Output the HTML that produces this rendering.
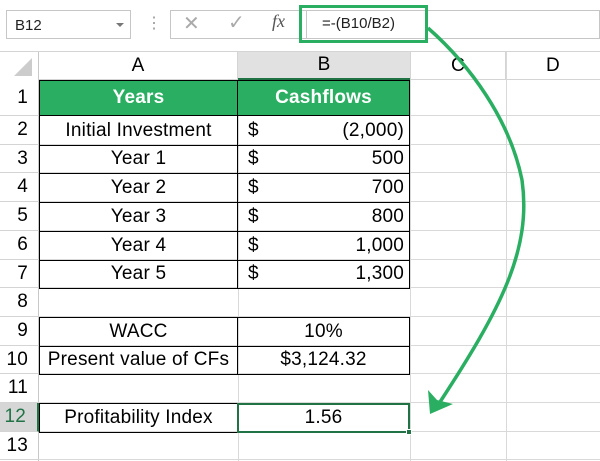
<!DOCTYPE html>
<html><head><style>
body{margin:0;width:600px;height:461px;overflow:hidden;background:#fff;font-family:"Liberation Sans",sans-serif;position:relative}
.a{position:absolute;box-sizing:border-box}
.c{display:flex;align-items:center;justify-content:center;font-size:19px;letter-spacing:0.2px;color:#000}
</style></head><body>
<!-- top bar -->
<div class="a" style="left:0;top:0;width:600px;height:52px;background:#fff;border-bottom:1px solid #d4d4d4"></div>
<div class="a" style="left:6px;top:10px;width:125px;height:29px;border:1px solid #c6c6c6;font-size:15px;padding:6px 0 0 8px;color:#222">B12</div>
<div class="a" style="left:116px;top:23px;width:0;height:0;border-left:4px solid transparent;border-right:4px solid transparent;border-top:4px solid #777"></div>
<div class="a" style="left:146px;top:13px;font-size:16px;color:#999">⋮</div>
<div class="a" style="left:170px;top:10px;width:430px;height:29px;border:1px solid #c6c6c6"></div>
<div class="a" style="left:183px;top:11px;font-size:20px;color:#aaa">✕</div>
<div class="a" style="left:228px;top:10px;font-size:20px;color:#aaa">✓</div>
<div class="a" style="left:272px;top:11px;font-size:18px;color:#555;font-family:'Liberation Serif',serif;font-style:italic">fx</div>
<div class="a" style="left:306px;top:10px;width:1px;height:29px;background:#c6c6c6"></div>
<div class="a" style="left:322px;top:15px;font-size:15px;color:#222">=-(B10/B2)</div>
<div class="a" style="left:299px;top:5px;width:129px;height:38px;border:3px solid #2aae62"></div>
<!-- column headers -->
<div class="a" style="left:0;top:52px;width:600px;height:28px;background:#fff;border-bottom:1px solid #d4d4d4"></div>
<div class="a" style="left:0;top:52px;width:39px;height:409px;background:#fff;border-right:1px solid #c8c8c8"></div>
<div class="a" style="left:14px;top:58px;width:0;height:0;border-left:18px solid transparent;border-bottom:18px solid #ccc"></div>
<div class="a c" style="left:39px;top:52px;width:199px;height:28px;border-right:1px solid #d4d4d4">A</div>
<div class="a c" style="left:238px;top:52px;width:172px;height:28px;background:#e1e1e1;border-bottom:2px solid #217346">B</div>
<div class="a c" style="left:410px;top:52px;width:96px;height:28px;border-right:1px solid #d4d4d4;border-left:1px solid #d4d4d4">C</div>
<div class="a c" style="left:506px;top:52px;width:94px;height:28px">D</div>
<!-- grid lines -->
<div class="a" style="left:410px;top:80px;width:1px;height:381px;background:#d9d9d9"></div>
<div class="a" style="left:506px;top:52px;width:1px;height:409px;background:#d9d9d9"></div>
<div class="a" style="left:238px;top:116px;width:1px;height:345px;background:#d9d9d9"></div>
<div id="rows"></div>
<!-- header row -->
<div class="a c" style="left:39px;top:80px;width:199px;height:36px;background:#2aae62;color:#fff;font-weight:bold;border:1px solid #000">Years</div>
<div class="a c" style="left:237px;top:80px;width:173px;height:36px;background:#2aae62;color:#fff;font-weight:bold;border:1px solid #000">Cashflows</div>
<script>
var h=document.getElementById('rows'),s='';
var tops=[80,116];for(var i=2;i<=13;i++)tops.push(Math.round(116+(i-1)*28.7));
for(var r=1;r<=13;r++){var t=tops[r-1],b=tops[r];
s+='<div class="a c" style="left:0;top:'+t+'px;width:39px;height:'+(b-t)+'px;'+(r==12?'background:#d6d6d6;color:#217346;border-right:2px solid #217346;':'')+'border-bottom:1px solid #d4d4d4;justify-content:flex-end;padding-right:11px">'+r+'</div>';
s+='<div class="a" style="left:39px;top:'+(b-1)+'px;width:561px;height:1px;background:#d9d9d9"></div>';}
var d=[['Initial Investment','(2,000)'],['Year 1','500'],['Year 2','700'],['Year 3','800'],['Year 4','1,000'],['Year 5','1,300']];
for(var k=0;k<6;k++){var t=tops[k+1],b=tops[k+2];
s+='<div class="a c" style="left:39px;top:'+t+'px;width:199px;height:'+(b-t+1)+'px;border:1px solid #000;border-top:0">'+d[k][0]+'</div>';
s+='<div class="a c" style="left:237px;top:'+t+'px;width:173px;height:'+(b-t+1)+'px;border:1px solid #000;border-top:0;justify-content:space-between;padding:0 5px 0 10px"><span>$</span><span>'+d[k][1]+'</span></div>';}
function box(r,a,bv,sel){var t=tops[r-1],b=tops[r];
s+='<div class="a c" style="left:39px;top:'+t+'px;width:199px;height:'+(b-t+1)+'px;border:1px solid #000">'+a+'</div>';
s+='<div class="a c" style="left:237px;top:'+t+'px;width:173px;height:'+(b-t+1)+'px;border:'+(sel?'2px solid #217346':'1px solid #000')+'">'+bv+'</div>';}
box(9,'WACC','10%');
var t=tops[9],b=tops[10];
s+='<div class="a c" style="left:39px;top:'+t+'px;width:199px;height:'+(b-t+1)+'px;border:1px solid #000;border-top:0">Present value of CFs</div><div class="a c" style="left:237px;top:'+t+'px;width:173px;height:'+(b-t+1)+'px;border:1px solid #000;border-top:0">$3,124.32</div>';
box(12,'Profitability Index','1.56',1);
s+='<div class="a" style="left:406px;top:'+(tops[12]-3)+'px;width:6px;height:6px;background:#217346;border:1px solid #fff"></div>';
h.innerHTML=s;
</script>
<svg class="a" style="left:0;top:0" width="600" height="461"><path d="M428 28 C470 65 510 120 522 180 C532 250 500 310 440 402" fill="none" stroke="#2aae62" stroke-width="3.5"/><path d="M430 414 L428 390 L437 400 L453 404 Z" fill="#2aae62"/></svg>
</body></html>
